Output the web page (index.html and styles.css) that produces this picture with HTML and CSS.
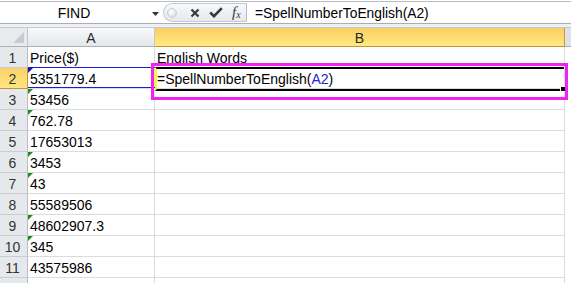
FILE: index.html
```html
<!DOCTYPE html>
<html>
<head>
<meta charset="utf-8">
<link rel="stylesheet" href="styles.css">
</head>
<body>
<div class="fbar">
  <div class="namebox">FIND</div>
  <div class="nb-arrow"><svg width="7" height="4" viewBox="0 0 7 4"><path d="M0 0H7L3.5 4Z" fill="#333"/></svg></div>
  <div class="pill">
    <span class="dot"></span>
    <svg class="ic" width="10" height="10" viewBox="0 0 10 10"><path d="M1.5 1.5L8.5 8.5M8.5 1.5L1.5 8.5" stroke="#3a3a3a" stroke-width="2.2"/></svg>
    <svg class="ic" width="14" height="11" viewBox="0 0 14 11"><path d="M1.2 5.5L5 9.2L12.8 1.2" stroke="#3a3a3a" stroke-width="2.6" fill="none"/></svg>
    <span class="fx">f<sub>x</sub></span>
  </div>
  <div class="formula">=SpellNumberToEnglish(A2)</div>
</div>
<div class="band"></div>
<div class="sheet">
  <div class="corner"><span class="tri"></span></div>
  <div class="colhdr">A</div>
  <div class="colhdr sel">B</div>
  <div class="colhdr rest"></div>

  <div class="rowhdr">1</div><div class="cell">Price($)</div><div class="cell">English Words</div><div class="cell edge"></div>
  <div class="rowhdr sel">2</div><div class="cell err blue">5351779.4</div><div class="cell editing">=SpellNumberToEnglish(<span class="ref">A2</span>)</div><div class="cell edge"></div>
  <div class="rowhdr">3</div><div class="cell err">53456</div><div class="cell"></div><div class="cell edge"></div>
  <div class="rowhdr">4</div><div class="cell err">762.78</div><div class="cell"></div><div class="cell edge"></div>
  <div class="rowhdr">5</div><div class="cell">17653013</div><div class="cell"></div><div class="cell edge"></div>
  <div class="rowhdr">6</div><div class="cell err">3453</div><div class="cell"></div><div class="cell edge"></div>
  <div class="rowhdr">7</div><div class="cell err">43</div><div class="cell"></div><div class="cell edge"></div>
  <div class="rowhdr">8</div><div class="cell">55589506</div><div class="cell"></div><div class="cell edge"></div>
  <div class="rowhdr">9</div><div class="cell err">48602907.3</div><div class="cell"></div><div class="cell edge"></div>
  <div class="rowhdr">10</div><div class="cell err">345</div><div class="cell"></div><div class="cell edge"></div>
  <div class="rowhdr">11</div><div class="cell">43575986</div><div class="cell"></div><div class="cell edge"></div>
  <div class="rowhdr last"></div><div class="cell last"></div><div class="cell last"></div><div class="cell edge"></div>

  <div class="rangebox"></div>
  <div class="editbox"><span class="handle"></span></div>
  <div class="annot"></div>
</div>
</body>
</html>
```

FILE: styles.css
```css
html, body {
  margin: 0;
  padding: 0;
  background: #fff;
}
body {
  width: 571px;
  height: 283px;
  overflow: hidden;
  font-family: "Liberation Sans", Arial, sans-serif;
  font-size: 14px;
  color: #000;
}
.fbar {
  height: 21px;
  margin-top: 1px;
  border-top: 1px solid #b8bec7;
  border-bottom: 1px solid #a9aeb5;
  display: flex;
  align-items: stretch;
  background: #fff;
  box-sizing: content-box;
}
.namebox {
  width: 148px;
  display: flex;
  align-items: center;
  justify-content: center;
  color: #000;
  font-size: 14px;
  padding-top: 1px;
}
.nb-arrow {
  width: 14px;
  display: flex;
  align-items: center;
  justify-content: center;
  padding-top: 2px;
}
.pill {
  margin: 1px 0 1px 1px;
  width: 84px;
  border: 1px solid #c4c9d0;
  border-right: 1px solid #b5bbc3;
  border-radius: 10px 0 0 10px;
  background: linear-gradient(#f7f8fa, #e6e9ed);
  display: flex;
  align-items: center;
  gap: 9px;
  padding-left: 3px;
  box-sizing: border-box;
}
.dot {
  width: 10px;
  height: 10px;
  border-radius: 50%;
  background: radial-gradient(circle at 40% 35%, #ffffff, #cfd4da);
  border: 1px solid #c8cdd3;
  box-sizing: border-box;
  margin-right: 4px;
}
.ic { display: block; }
.fx {
  font-family: "Liberation Serif", "Times New Roman", serif;
  font-style: italic;
  font-size: 15px;
  color: #3a3a3a;
  line-height: 1;
}
.fx sub {
  font-size: 10px;
  vertical-align: -1px;
}
.formula {
  flex: 1;
  display: flex;
  align-items: center;
  padding-left: 8px;
  padding-top: 1px;
  font-size: 13.8px;
}
.band {
  height: 3px;
  background: #eef0f2;
  border-bottom: 1px solid #c6cbd1;
}
.sheet {
  position: relative;
  display: grid;
  grid-template-columns: 28px 127px 410px 6px;
  grid-template-rows: 19px repeat(11, 21px) 6px;
}
.corner {
  position: relative;
  background: #e8eaed;
  border-right: 1px solid #c3c8ce;
  border-bottom: 1px solid #a9b0b8;
  box-sizing: border-box;
}
.tri {
  position: absolute;
  right: 3px;
  bottom: 3px;
  width: 0;
  height: 0;
  border-left: 11px solid transparent;
  border-bottom: 11px solid #c7ccd2;
}
.colhdr {
  background: linear-gradient(#f8f9fa, #e4e7eb);
  border-right: 1px solid #c5cad0;
  border-bottom: 1px solid #a9b0b8;
  box-sizing: border-box;
  display: flex;
  align-items: center;
  justify-content: center;
  color: #2a2a2a;
  padding-top: 1px;
}
.colhdr.sel {
  background: linear-gradient(#f8cf63, #ffea80);
  border-right: 1px solid #c49a48;
  border-bottom: 1px solid #c2923e;
}
.colhdr.rest {
  background: #dfe3e8;
  border-right: none;
}
.rowhdr {
  background: #e6e9ec;
  border-right: 1px solid #b9bfc6;
  border-bottom: 1px solid #c9cdd2;
  box-sizing: border-box;
  display: flex;
  align-items: flex-end;
  justify-content: center;
  color: #333;
  line-height: 14px;
  padding-bottom: 2px;
  padding-right: 2px;
}
.rowhdr.sel {
  background: linear-gradient(#f8d26a, #ffe680);
  border-right: 1px solid #c2923e;
  border-bottom: 1px solid #c2923e;
}
.rowhdr.last, .cell.last {
  border-bottom: none;
}
.cell {
  position: relative;
  border-right: 1px solid #dadcdd;
  border-bottom: 1px solid #dadcdd;
  box-sizing: border-box;
  display: flex;
  align-items: flex-end;
  line-height: 14px;
  padding: 0 0 2px 2px;
  white-space: nowrap;
  overflow: visible;
}
.cell.edge {
  border-right: none;
  border-bottom: none;
}
.cell.err::before {
  content: "";
  position: absolute;
  left: 0;
  top: 0;
  width: 0;
  height: 0;
  border-top: 5px solid #1f8a1f;
  border-right: 5px solid transparent;
}
.cell.blue::before {
  border-top-color: #1717a8;
}
.cell.editing {
  z-index: 2;
}
.ref { color: #2323d0; }
.rangebox {
  position: absolute;
  left: 28px;
  top: 39px;
  width: 127px;
  height: 21px;
  border-top: 1px solid #1c1ce0;
  border-bottom: 1px solid #1c1ce0;
  box-sizing: border-box;
  pointer-events: none;
}
.editbox {
  position: absolute;
  left: 155px;
  top: 39px;
  width: 409px;
  height: 24px;
  border-top: 2px solid #000;
  border-bottom: 2px solid #000;
  border-left: 2px solid #ffff00;
  box-sizing: border-box;
  pointer-events: none;
  z-index: 3;
}
.handle {
  position: absolute;
  right: -2px;
  bottom: -3px;
  width: 4px;
  height: 4px;
  background: #000;
  border: 1px solid #fff;
}
.annot {
  position: absolute;
  left: 151px;
  top: 35px;
  width: 417px;
  height: 37px;
  border: 3px solid #f222f2;
  box-sizing: border-box;
  pointer-events: none;
  z-index: 4;
}
```
